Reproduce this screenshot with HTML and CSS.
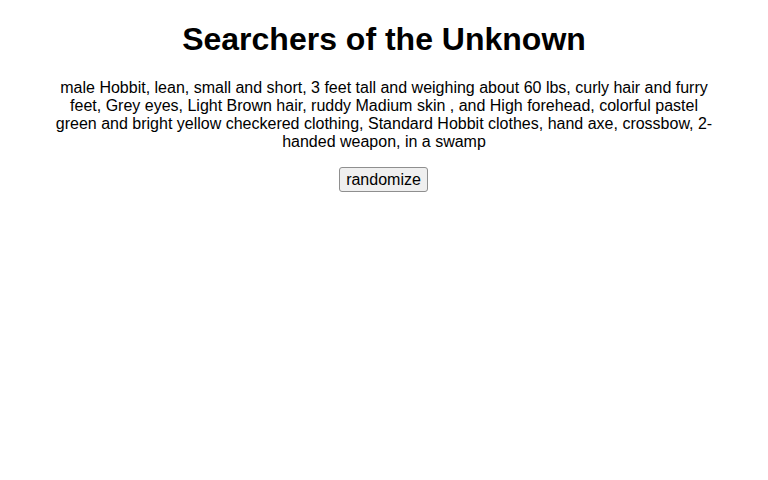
FILE: index.html
```html
<!DOCTYPE html>
<html lang="en">
<head>
<meta charset="utf-8">
<title>Searchers of the Unknown</title>
<link rel="stylesheet" href="styles.css">
</head>
<body>
<main class="page">
  <h1 class="title">Searchers of the Unknown</h1>
  <p class="description">male Hobbit, lean, small and short, 3 feet tall and weighing about 60 lbs, curly hair and furry feet, Grey eyes, Light Brown hair, ruddy Madium skin , and High forehead, colorful pastel green and bright yellow checkered clothing, Standard Hobbit clothes, hand axe, crossbow, 2-handed weapon, in a swamp</p>
  <button class="randomize" type="button">randomize</button>
</main>
</body>
</html>
```

FILE: styles.css
```css
body {
  margin: 0;
  font-family: "Liberation Sans", Arial, sans-serif;
  color: #000;
  background: #fff;
}

.page {
  text-align: center;
  padding: 0 52px;
}

.title {
  font-size: 32px;
  font-weight: bold;
  margin: 21px 0;
}

.description {
  font-size: 16px;
  line-height: 18px;
  margin: 16px 0;
}

.randomize {
  font-family: "Liberation Sans", Arial, sans-serif;
  font-size: 16px;
  line-height: 19px;
  padding: 2px 6px;
  margin: 0 0 0 -1px;
  border: 1px solid #8f8f8f;
  border-radius: 3px;
  background: #efefef;
  color: #000;
}
```
